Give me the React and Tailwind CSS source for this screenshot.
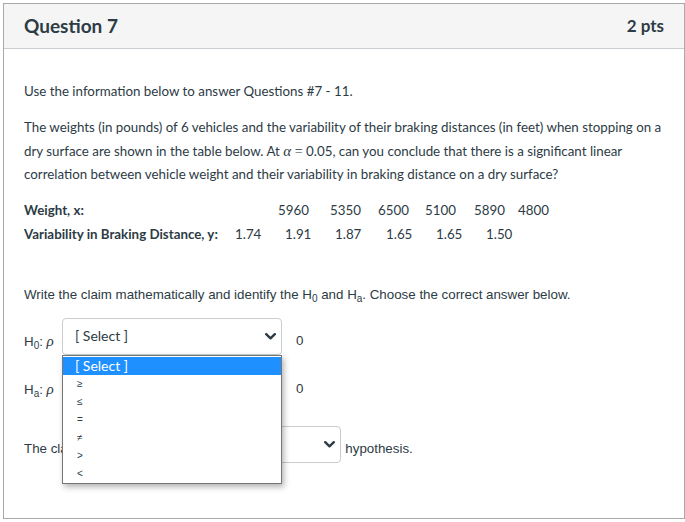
import React from "react";

function Chevron() {
  return (
    <svg width="11" height="7" viewBox="0 0 11 7" className="shrink-0">
      <path d="M1.2 1.2 L5.5 5.3 L9.8 1.2" fill="none" stroke="#2d3b45" strokeWidth="2.4" strokeLinecap="round" strokeLinejoin="round" />
    </svg>
  );
}

function FakeSelect({ className = "", text }) {
  return (
    <div className={"h-[37px] rounded-[4px] border border-[#c7cdd1] bg-white flex items-center justify-between pl-[12px] pr-[5px] " + className}>
      <span className="text-[14px] text-[#2d3b45] -mt-[2px]" style={{ fontFamily: "Lato, sans-serif" }}>{text}</span>
      <Chevron />
    </div>
  );
}

function Sub({ children }) {
  return <span className="text-[10px] relative top-[3px] leading-none">{children}</span>;
}

export default function App() {
  const lato = { fontFamily: "Lato, 'Noto Sans', sans-serif" };
  const arial = { fontFamily: "'Liberation Sans', Arial, sans-serif" };
  const serif = { fontFamily: "'Liberation Serif', 'DejaVu Serif', serif" };
  const options = ["≥", "≤", "=", "≠", ">", "<"];
  return (
    <div className="w-[685px] h-[522px] bg-white pt-[3px] pl-[3px]">
      <div className="relative w-[682px] h-[516px] border border-[#a9a9a9] text-[#2d3b45]">
        <div className="h-[45px] bg-[#f5f5f5] border-b border-[#c7cdd1] flex items-center justify-between px-[20px]" style={lato}>
          <span className="text-[19px] font-bold">Question 7</span>
          <span className="text-[17px] font-bold">2 pts</span>
        </div>
        <div className="pl-[20px] pr-[20px] pt-[30px]">
          <p className="text-[13.33px] leading-[24px]" style={lato}>
            Use the information below to answer Questions #7 - 11.
          </p>
          <p className="text-[13.33px] leading-[23.5px] mt-[13px]" style={lato}>
            The weights (in pounds) of 6 vehicles and the variability of their braking distances (in feet) when stopping on a dry surface are shown in the table below. At{" "}
            <span className="italic text-[15px]" style={serif}>α</span>
            <span style={serif} className="text-[14px]"> = </span>0.05, can you conclude that there is a significant linear correlation between vehicle weight and their variability in braking distance on a dry surface?
          </p>
          <div className="mt-[12px] text-[13.33px]" style={lato}>
            <div className="flex h-[24px] items-center">
              <span className="w-[254px] font-bold">Weight, x:</span>
              <span className="w-[52px]">5960</span>
              <span className="w-[48px]">5350</span>
              <span className="w-[47px]">6500</span>
              <span className="w-[49px]">5100</span>
              <span className="w-[44px]">5890</span>
              <span>4800</span>
            </div>
            <div className="flex h-[24px] items-center">
              <span className="w-[211px] font-bold">Variability in Braking Distance, y:</span>
              <span className="w-[50px]">1.74</span>
              <span className="w-[50px]">1.91</span>
              <span className="w-[51px]">1.87</span>
              <span className="w-[50px]">1.65</span>
              <span className="w-[50px]">1.65</span>
              <span>1.50</span>
            </div>
          </div>
          <p className="mt-[38px] text-[13.33px] leading-[20px]" style={arial}>
            Write the claim mathematically and identify the H<Sub>0</Sub> and H<Sub>a</Sub>. Choose the correct answer below.
          </p>
          <div className="mt-[13px] flex items-start h-[37px]">
            <span className="w-[38px] pt-[13px] leading-[20px] text-[13.33px]" style={arial}>
              H<Sub>0</Sub>: <span className="italic text-[15px]" style={serif}>ρ</span>
            </span>
            <FakeSelect className="w-[220px]" text="[ Select ]" />
            <span className="pl-[14px] pt-[13px] leading-[20px] text-[13.33px]" style={arial}>0</span>
          </div>
          <div className="mt-[11px] flex items-start h-[37px]">
            <span className="w-[38px] pt-[13px] leading-[20px] text-[13.33px]" style={arial}>
              H<Sub>a</Sub>: <span className="italic text-[15px]" style={serif}>ρ</span>
            </span>
            <FakeSelect className="w-[220px]" text="[ Select ]" />
            <span className="pl-[14px] pt-[13px] leading-[20px] text-[13.33px]" style={arial}>0</span>
          </div>
          <div className="mt-[23px] flex items-start h-[37px]">
            <span className="pt-[13px] leading-[20px] text-[13.33px] pr-[4px]" style={arial}>The claim is the</span>
            <FakeSelect className="w-[220px]" text="[ Select ]" />
            <span className="pl-[4px] pt-[13px] leading-[20px] text-[13.33px]" style={arial}>hypothesis.</span>
          </div>
        </div>
        <div className="absolute left-[58px] top-[351px] w-[220px] h-[129px] bg-white border border-[#767676] shadow-[2px_3px_6px_rgba(0,0,0,0.3)] pt-[1px]">
          <div className="h-[18px] bg-[#1e90ff] text-white text-[14px] leading-[18px] pl-[12px]" style={lato}>[ Select ]</div>
          {options.map((o) => (
            <div key={o} className="h-[18px] leading-[18px] pl-[14px] text-[10px] text-[#2d3b45]" style={arial}>{o}</div>
          ))}
        </div>
      </div>
    </div>
  );
}
